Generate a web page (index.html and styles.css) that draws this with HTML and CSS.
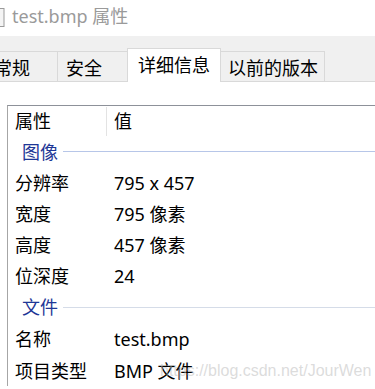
FILE: index.html
```html
<!DOCTYPE html>
<html lang="zh-CN">
<head>
<meta charset="utf-8">
<title>test.bmp 属性</title>
<link rel="stylesheet" href="styles.css">
</head>
<body>
<div class="titlebar">
  <svg class="file-icon" width="6" height="20" viewBox="0 0 6 20"><rect x="-6" y="0.5" width="10" height="18" fill="#f4f4f4" stroke="#9a9a9a" stroke-width="1"/></svg>
  <span class="title-text">test.bmp 属性</span>
</div>
<div class="tabstrip">
  <div class="tab tab-general">常规</div>
  <div class="tab tab-security">安全</div>
  <div class="tab tab-details active">详细信息</div>
  <div class="tab tab-prev">以前的版本</div>
</div>
<div class="content">
  <div class="panel">
    <div class="row header">
      <div class="col-name">属性</div>
      <div class="col-sep"></div>
      <div class="col-value">值</div>
    </div>
    <div class="group group-focus"><span class="group-label">图像</span><span class="group-line"></span></div>
    <div class="row"><div class="col-name">分辨率</div><div class="col-value">795 x 457</div></div>
    <div class="row"><div class="col-name">宽度</div><div class="col-value">795 像素</div></div>
    <div class="row"><div class="col-name">高度</div><div class="col-value">457 像素</div></div>
    <div class="row"><div class="col-name">位深度</div><div class="col-value">24</div></div>
    <div class="group tall"><span class="group-label">文件</span><span class="group-line"></span></div>
    <div class="row tall"><div class="col-name">名称</div><div class="col-value">test.bmp</div></div>
    <div class="row"><div class="col-name">项目类型</div><div class="col-value">BMP 文件</div></div>
  </div>
  <div class="watermark">https://blog.csdn.net/JourWen</div>
</div>
</body>
</html>
```
FILE: styles.css
```css
html, body {
  margin: 0;
  padding: 0;
  background: #ffffff;
  overflow: hidden;
}
body {
  width: 375px;
  height: 389px;
  font-family: "Noto Sans", "Noto Sans CJK SC", sans-serif;
  color: #000;
}
.titlebar {
  height: 36px;
  display: flex;
  align-items: center;
  background: #fff;
}
.file-icon {
  display: block;
}
.title-text {
  margin-left: 6px;
  font-size: 18px;
  color: #9a9a9a;
  line-height: 20px;
  margin-top: -4px;
}
.tabstrip {
  height: 46px;
  background: #f0f0f0;
  display: flex;
  align-items: flex-end;
  box-sizing: border-box;
  border-bottom: 1px solid #d9d9d9;
  margin-left: -15px;
}
.tab {
  box-sizing: border-box;
  height: 30px;
  border: 1px solid #d9d9d9;
  border-bottom: none;
  border-right: none;
  background: #f0f0f0;
  font-size: 18px;
  line-height: 33px;
  padding-left: 8px;
  white-space: nowrap;
  overflow: hidden;
}
.tab-general { width: 72px; }
.tab-security { width: 70px; }
.tab-details {
  width: 94px;
  padding-left: 10px;
}
.tab-prev {
  width: 104px;
  padding-left: 7px;
  border-right: 1px solid #d9d9d9;
  border-left: none;
}
.tab.active {
  background: #fff;
  height: 34px;
  line-height: 33px;
  margin-bottom: -1px;
  border-right: 1px solid #d9d9d9;
}
.content {
  position: relative;
  padding: 23px 0 0 7px;
  height: 284px;
  background: #fff;
}
.panel {
  border-top: 1px solid #8d9199;
  border-left: 1px solid #a6a6a6;
  padding-left: 7px;
  font-size: 18px;
}
.row {
  height: 31px;
  display: flex;
  align-items: center;
  line-height: 24px;
}
.row.tall { height: 32px; }
.row.header {
  height: 30px;
  align-items: stretch;
}
.row.header .col-name,
.row.header .col-value {
  display: flex;
  align-items: center;
}
.col-name {
  width: 99px;
  flex: none;
}
.row.header .col-name { width: 91px; }
.col-sep {
  width: 1px;
  margin-top: 1px;
  background: #e3e3e3;
}
.row.header .col-value { padding-left: 7px; }
.col-value { white-space: nowrap; }
.group {
  height: 31px;
  display: flex;
  align-items: center;
  padding-left: 7px;
}
.group.tall { height: 32px; }
.group-label {
  color: #1e3796;
  line-height: 24px;
}
.group-line {
  flex: 1;
  height: 1px;
  margin-left: 5px;
  background: #d5dce8;
}
.group-focus .group-line { background: #b7c6e8; }
.watermark {
  position: absolute;
  left: 160px;
  top: 280px;
  font-family: "Liberation Sans", Arial, sans-serif;
  font-size: 16px;
  color: rgba(190, 190, 190, 0.55);
  white-space: nowrap;
}
```
